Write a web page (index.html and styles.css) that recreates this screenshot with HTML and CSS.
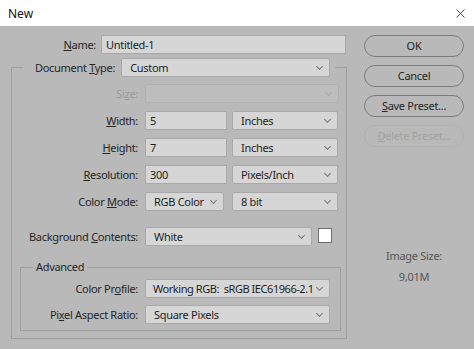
FILE: index.html
```html
<!DOCTYPE html>
<html lang="en">
<head>
    <meta charset="UTF-8">
    <meta name="viewport" content="width=device-width, initial-scale=1.0">
    <title>New</title>
    <link rel="stylesheet" href="styles.css">
</head>
<body>
    <div class="window">
        <div class="titlebar">
            <span class="title">New</span>
            <svg class="close" width="9" height="9" viewBox="0 0 9 9">
                <path d="M0.5 0.5 L8.5 8.5 M8.5 0.5 L0.5 8.5" stroke="#333" stroke-width="0.9" fill="none"/>
            </svg>
        </div>

        <div class="dialog">
            <div class="form">
                <div class="name-row">
                    <span class="lbl name-lbl"><u>N</u>ame:</span>
                    <div class="field name-field">Untitled-1</div>
                </div>

                <!-- Document type group -->
                <fieldset class="group">
                    <legend class="group-legend">
                        <div class="legend-row">
                            <span class="lbl">Document <u>T</u>ype:</span>
                            <div class="select doc-select">Custom</div>
                        </div>
                    </legend>

                    <div class="rows">
                        <span class="lbl disabled">Si<u>z</u>e:</span>
                        <div class="ctrl"><div class="select disabled size-select"></div></div>

                        <span class="lbl"><u>W</u>idth:</span>
                        <div class="ctrl">
                            <div class="field num-field">5</div>
                            <div class="select unit-select">Inches</div>
                        </div>

                        <span class="lbl"><u>H</u>eight:</span>
                        <div class="ctrl">
                            <div class="field num-field">7</div>
                            <div class="select unit-select">Inches</div>
                        </div>

                        <span class="lbl"><u>R</u>esolution:</span>
                        <div class="ctrl">
                            <div class="field num-field">300</div>
                            <div class="select unit-select">Pixels/Inch</div>
                        </div>

                        <span class="lbl">Color <u>M</u>ode:</span>
                        <div class="ctrl mode-ctrl">
                            <div class="select mode-select">RGB Color</div>
                            <div class="select unit-select">8 bit</div>
                        </div>

                        <span class="lbl bg-row">Background <u>C</u>ontents:</span>
                        <div class="ctrl bg-row bg-ctrl">
                            <div class="select bg-select">White</div>
                            <div class="swatch"></div>
                        </div>
                    </div>

                    <!-- Advanced group -->
                    <fieldset class="adv">
                        <legend class="adv-legend">Advanced</legend>
                        <div class="rows adv-rows">
                            <span class="lbl">Color Pr<u>o</u>file:</span>
                            <div class="ctrl"><div class="select wide-select profile-select">Working RGB:&nbsp; sRGB IEC61966-2.1</div></div>

                            <span class="lbl">Pi<u>x</u>el Aspect Ratio:</span>
                            <div class="ctrl"><div class="select wide-select">Square Pixels</div></div>
                        </div>
                    </fieldset>
                </fieldset>
            </div>

            <div class="side">
                <div class="btn">OK</div>
                <div class="btn">Cancel</div>
                <div class="btn"><u>S</u>ave Preset...</div>
                <div class="btn disabled"><u>D</u>elete Preset...</div>
                <div class="image-size">Image Size:<br>9,01M</div>
            </div>
        </div>
    </div>
</body>
</html>
```

FILE: styles.css
```css
body {
    margin: 0;
    padding: 0;
    font-family: "Noto Sans", "Open Sans", sans-serif;
    font-size: 11px;
    letter-spacing: -0.3px;
    color: #262626;
    background-color: #b9b9b9;
}

.window {
    width: 474px;
    height: 349px;
    background-color: #b9b9b9;
    overflow: hidden;
}

/* Title bar */
.titlebar {
    height: 26px;
    background-color: #fff;
    display: flex;
    align-items: center;
    justify-content: space-between;
    padding: 0 9px 0 8px;
}

.title {
    font-size: 12px;
    color: #111;
    letter-spacing: 0;
}

.close {
    display: block;
}

/* Dialog body */
.dialog {
    display: flex;
    padding: 9px 0 0 11px;
}

.form {
    width: 336px;
}

.lbl {
    text-align: right;
    white-space: nowrap;
}

.lbl.disabled {
    color: #9c9c9c;
}

.name-row {
    display: flex;
    align-items: center;
    gap: 5px;
}

.name-lbl {
    width: 85px;
}

.field {
    height: 19px;
    box-sizing: border-box;
    border: 1px solid #a9a9a9;
    background-color: #d6d6d6;
    padding: 0 4px;
    line-height: 17px;
    color: #1e1e1e;
    white-space: nowrap;
}

.name-field {
    width: 245px;
}

.select {
    position: relative;
    height: 19px;
    box-sizing: border-box;
    border: 1px solid #a9a9a9;
    border-radius: 2px;
    background-color: #d6d6d6;
    padding: 0 18px 0 8px;
    line-height: 17px;
    color: #1e1e1e;
    white-space: nowrap;
    overflow: hidden;
}

.select::after {
    content: "";
    position: absolute;
    right: 7px;
    top: 5px;
    width: 4px;
    height: 4px;
    border-right: 1px solid #777;
    border-bottom: 1px solid #777;
    transform: rotate(45deg);
}

.select.disabled {
    background-color: #bdbdbd;
    border-color: #b1b1b1;
}

.select.disabled::after {
    border-color: #a9a9a9;
}

/* Groups */
.group {
    margin: 4px 0 0 0;
    padding: 0;
    border: 1px solid #a0a0a0;
    min-width: 0;
}

.group-legend {
    margin-left: 11px;
    padding: 0 5px 0 12px;
}

.legend-row {
    display: flex;
    align-items: center;
    gap: 6px;
}

.doc-select {
    width: 209px;
}

.rows {
    display: grid;
    grid-template-columns: 126px 1fr;
    column-gap: 7px;
    row-gap: 8px;
    align-items: center;
    padding-top: 7px;
}

.ctrl {
    display: flex;
    gap: 5px;
}

.size-select {
    width: 194px;
}

.num-field {
    width: 82px;
}

.unit-select {
    width: 106px;
}

.mode-ctrl {
    gap: 8px;
}

.mode-select {
    width: 79px;
}

.bg-row {
    margin-top: 8px;
}

.bg-ctrl {
    gap: 6px;
    align-items: flex-start;
}

.bg-select {
    width: 167px;
}

.swatch {
    width: 14px;
    height: 15px;
    box-sizing: border-box;
    margin-top: 1px;
    background-color: #fff;
    border: 1px solid #6f6f6f;
}

.adv {
    margin: 13px 5px 7px 8px;
    padding: 0 0 6px 0;
    border: 1px solid #a0a0a0;
    min-width: 0;
}

.adv-legend {
    margin-left: 12px;
    padding: 0 3px;
    line-height: 16px;
}

.adv-rows {
    grid-template-columns: 117px 1fr;
    row-gap: 7px;
    padding-top: 4px;
}

.wide-select {
    width: 185px;
}

.profile-select {
    padding-right: 12px;
    padding-left: 7px;
    letter-spacing: -0.45px;
}

/* Buttons column */
.side {
    width: 100px;
    margin-left: 17px;
    display: flex;
    flex-direction: column;
    gap: 8px;
}

.btn {
    height: 22px;
    box-sizing: border-box;
    border: 1px solid #7b7b7b;
    border-radius: 11px;
    text-align: center;
    line-height: 20px;
    color: #262626;
}

.btn.disabled {
    border-color: #b0b0b0;
    color: #a2a2a2;
}

.image-size {
    margin-top: 90px;
    text-align: center;
    line-height: 21px;
    color: #555;
}
```
